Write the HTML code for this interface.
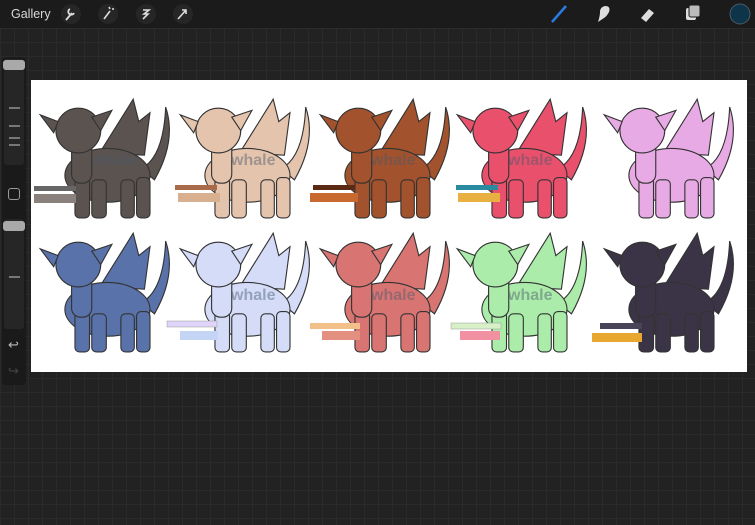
<!DOCTYPE html>
<html><head><meta charset="utf-8"><style>
html,body{margin:0;padding:0}
body{width:755px;height:525px;overflow:hidden;position:relative;font-family:"Liberation Sans",sans-serif;
background-color:#222;background-image:linear-gradient(#2a2a2a 1px,transparent 1px),linear-gradient(90deg,#2a2a2a 1px,transparent 1px);background-size:14px 14px;background-position:0 0}
.top{position:absolute;left:0;top:0;width:755px;height:28px;background:#1b1b1b}
.gal{position:absolute;left:11px;top:7px;color:#d8d8d8;font-size:12.5px}
.ib{position:absolute;top:4px;width:20px;height:20px;border-radius:50%;background:#262626}
.side{position:absolute;left:2px;top:57px;width:24px;height:328px;background:#1a1a1a;border-radius:4px}
.sl{position:absolute;left:2px;width:20px;background:#262626;border-radius:3px}
.knob{position:absolute;left:1px;width:22px;height:10px;background:#a9a9a9;border-radius:3px}
.tick{position:absolute;left:7px;width:11px;height:2px;background:#777}
.canvas{position:absolute;left:31px;top:80px;width:716px;height:292px;background:#fff}
</style></head><body>
<div class="top">
<div class="gal">Gallery</div>
<div class="ib" style="left:61px"></div><div class="ib" style="left:98px"></div><div class="ib" style="left:136px"></div><div class="ib" style="left:173px"></div>
<svg style="position:absolute;left:0;top:0" width="755" height="28">
<path d="M66 20 L72 13 M70 9 a3 3 0 1 0 4 4" stroke="#ddd" stroke-width="1.8" fill="none"/>
<path d="M104 19 L110 11 M109 7 l1 2 M112 9 l2 0" stroke="#ddd" stroke-width="1.6" fill="none"/>
<path d="M143 10 h6 l-5 4 h4 l-5 5" stroke="#ddd" stroke-width="1.6" fill="none"/>
<path d="M178 19 L186 10 M182 10 h4 v4" stroke="#ddd" stroke-width="1.6" fill="none"/>
<path d="M552 22 L566 6" stroke="#2a7be0" stroke-width="2.5"/>
<path d="M598 22 q2-6 2-10 q0-5 5-6 q6 0 4 6 q-2 4-5 6 z" fill="#ddd"/>
<path d="M641 18 l8-9 l5 4 l-8 9 z" fill="#ddd"/>
<rect x="686" y="8" width="10" height="12" rx="2" fill="#ddd"/><rect x="689" y="5" width="11" height="12" rx="2" fill="#bbb" stroke="#1b1b1b"/>
<circle cx="740" cy="14" r="10" fill="#0d3448" stroke="#4a5a66"/>
</svg>
</div>
<div class="side">
<div class="sl" style="top:2px;height:106px"></div>
<div class="knob" style="top:3px"></div>
<div class="tick" style="top:50px"></div><div class="tick" style="top:68px"></div><div class="tick" style="top:80px"></div><div class="tick" style="top:87px"></div>
<div style="position:absolute;left:6px;top:131px;width:10px;height:10px;border:1.5px solid #999;border-radius:3px"></div>
<div class="sl" style="top:162px;height:110px"></div>
<div class="knob" style="top:164px"></div>
<div class="tick" style="top:219px"></div>
<div style="position:absolute;left:6px;top:280px;color:#bbb;font-size:13px">↩</div>
<div style="position:absolute;left:6px;top:306px;color:#444;font-size:13px">↪</div>
</div>
<div class="canvas">
<svg width="716" height="292" viewBox="31 80 716 292">
<defs>
<g id="dr">
<path d="M92 72 q20 -10 22 -55 q10 30 -10 65 z"/>
<path d="M55 58 L85 10 L90 30 L100 22 L95 60 z"/>
<ellipse cx="62" cy="78" rx="38" ry="24"/>
<rect x="33" y="80" width="13" height="36" rx="4"/><rect x="48" y="82" width="13" height="34" rx="4"/>
<rect x="74" y="82" width="12" height="34" rx="4"/><rect x="88" y="80" width="12" height="36" rx="4"/>
<rect x="30" y="45" width="18" height="40" rx="8"/>
<circle cx="36" cy="38" r="20"/>
<path d="M18 30 l-16 -6 l12 16 z M48 26 l18 -6 l-10 18 z"/>
</g>
</defs>
<g stroke="#333" stroke-width="1">
<use href="#dr" transform="translate(38,88) scale(1.12)" fill="#5b5350"/>
<use href="#dr" transform="translate(178,88) scale(1.12)" fill="#e4c4ad"/>
<use href="#dr" transform="translate(318,88) scale(1.12)" fill="#a2522c"/>
<use href="#dr" transform="translate(455,88) scale(1.12)" fill="#e8506c"/>
<use href="#dr" transform="translate(602,88) scale(1.12)" fill="#e8aae4"/>
<use href="#dr" transform="translate(38,222) scale(1.12)" fill="#5a72aa"/>
<use href="#dr" transform="translate(178,222) scale(1.12)" fill="#d4dcf8"/>
<use href="#dr" transform="translate(318,222) scale(1.12)" fill="#d87472"/>
<use href="#dr" transform="translate(455,222) scale(1.12)" fill="#acecaa"/>
<use href="#dr" transform="translate(602,222) scale(1.12)" fill="#3a3446"/>
</g>
<g fill="#4a5a6c" font-size="16" opacity=".45" font-family="Liberation Sans,sans-serif" font-weight="bold">
<text x="92" y="165">whale</text><text x="231" y="165">whale</text><text x="371" y="165">whale</text><text x="508" y="165">whale</text>
<text x="231" y="300">whale</text><text x="371" y="300">whale</text><text x="508" y="300">whale</text>
</g>
<g>
<rect x="34" y="186" width="42" height="5" fill="#666"/><rect x="34" y="194" width="42" height="9" fill="#8a807c"/>
<rect x="175" y="185" width="42" height="5" fill="#a86a4a"/><rect x="178" y="193" width="42" height="9" fill="#d8b090"/>
<rect x="313" y="185" width="42" height="5" fill="#5a2a14"/><rect x="310" y="193" width="48" height="9" fill="#c86a30"/>
<rect x="456" y="185" width="42" height="5" fill="#2a8aa0"/><rect x="458" y="193" width="42" height="9" fill="#e8b040"/>
<rect x="167" y="321" width="50" height="6" fill="#e0d4f8" stroke="#999" stroke-width=".5"/><rect x="180" y="331" width="38" height="9" fill="#c4d4f4"/>
<rect x="310" y="323" width="50" height="6" fill="#f4c08a"/><rect x="322" y="331" width="38" height="9" fill="#e49080"/>
<rect x="451" y="323" width="50" height="6" fill="#d8f0c8" stroke="#999" stroke-width=".5"/><rect x="460" y="331" width="40" height="9" fill="#f090a0"/>
<rect x="600" y="323" width="42" height="6" fill="#4a4458"/><rect x="592" y="333" width="50" height="9" fill="#e8a830"/>
</g>
</svg>
</div>
</body></html>
